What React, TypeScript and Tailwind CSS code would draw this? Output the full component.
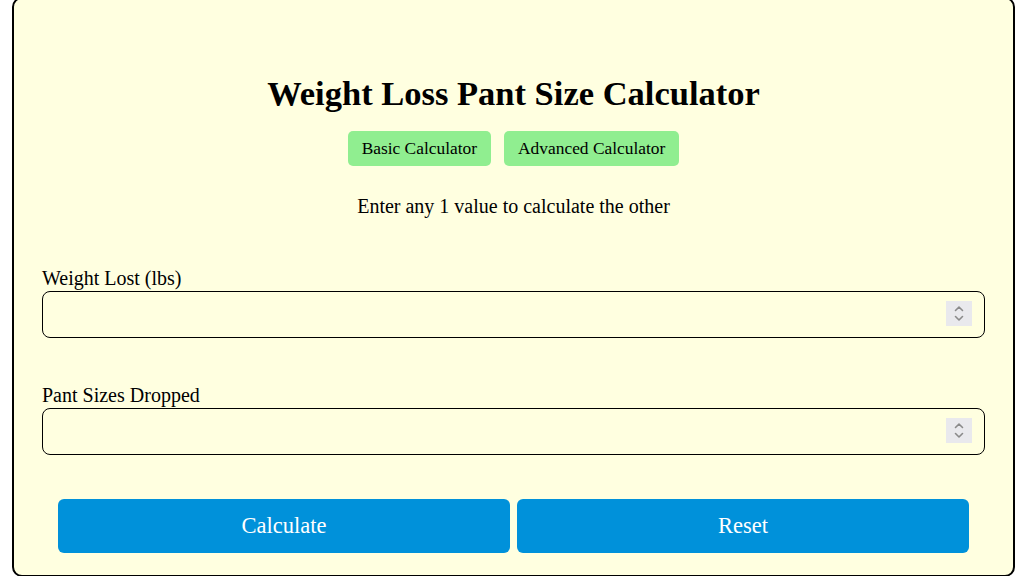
import React from 'react'

const serif = { fontFamily: '"Liberation Serif", "Times New Roman", serif' }

// Spinner drawn to match the always-visible number input arrows
const Spinner = () => (
	<div className="pointer-events-none absolute right-[13px] top-[10px] flex h-[25px] w-[26px] items-center justify-center bg-[#e9e9ed]">
		<svg width="12" height="19" viewBox="0 0 12 19" fill="none" stroke="#8a8a8a" strokeWidth="1.6" strokeLinecap="round" strokeLinejoin="round">
			<path d="M2.5 6.5 L6 3 L9.5 6.5" />
			<path d="M2.5 12.5 L6 16 L9.5 12.5" />
		</svg>
	</div>
)

const Field = ({ label, className }: { label: string; className?: string }) => (
	<div className={className}>
		<label className="block text-[20px] leading-[24px] text-black">{label}</label>
		<div className="relative mt-[1px]">
			<input
				type="text"
				className="block h-[47px] w-full rounded-[8px] border border-black bg-transparent px-3 text-[18px] outline-none"
				style={serif}
			/>
			<Spinner />
		</div>
	</div>
)

export default function App() {
	return (
		<div className="min-h-screen overflow-hidden bg-white" style={serif}>
			<div className="-mt-[3px] ml-[12px] w-[1003px] rounded-[10px] border-2 border-black bg-[#ffffe0] px-[28px] pb-[22px] pt-[74px]">
				{/* Header */}
				<h1 className="text-center text-[34.5px] font-bold leading-[40px] text-black">Weight Loss Pant Size Calculator</h1>

				<div className="mt-[18px] flex justify-center gap-[13px]">
					<button className="h-[35px] rounded-[5px] bg-[#90ee90] px-[14px] text-[17.4px] text-black">Basic Calculator</button>
					<button className="h-[35px] rounded-[5px] bg-[#90ee90] px-[14px] text-[17.4px] text-black">Advanced Calculator</button>
				</div>

				<p className="mt-[28px] text-center text-[20px] leading-[24px] text-black">Enter any 1 value to calculate the other</p>

				{/* Inputs */}
				<Field label="Weight Lost (lbs)" className="mt-[48px]" />
				<Field label="Pant Sizes Dropped" className="mt-[45px]" />

				{/* Buttons */}
				<div className="mx-[16px] mt-[44px] flex gap-[7px]">
					<button className="h-[54px] flex-1 rounded-[6px] bg-[#0091da] text-[22.5px] text-white">Calculate</button>
					<button className="h-[54px] flex-1 rounded-[6px] bg-[#0091da] text-[22.5px] text-white">Reset</button>
				</div>
			</div>
		</div>
	)
}
